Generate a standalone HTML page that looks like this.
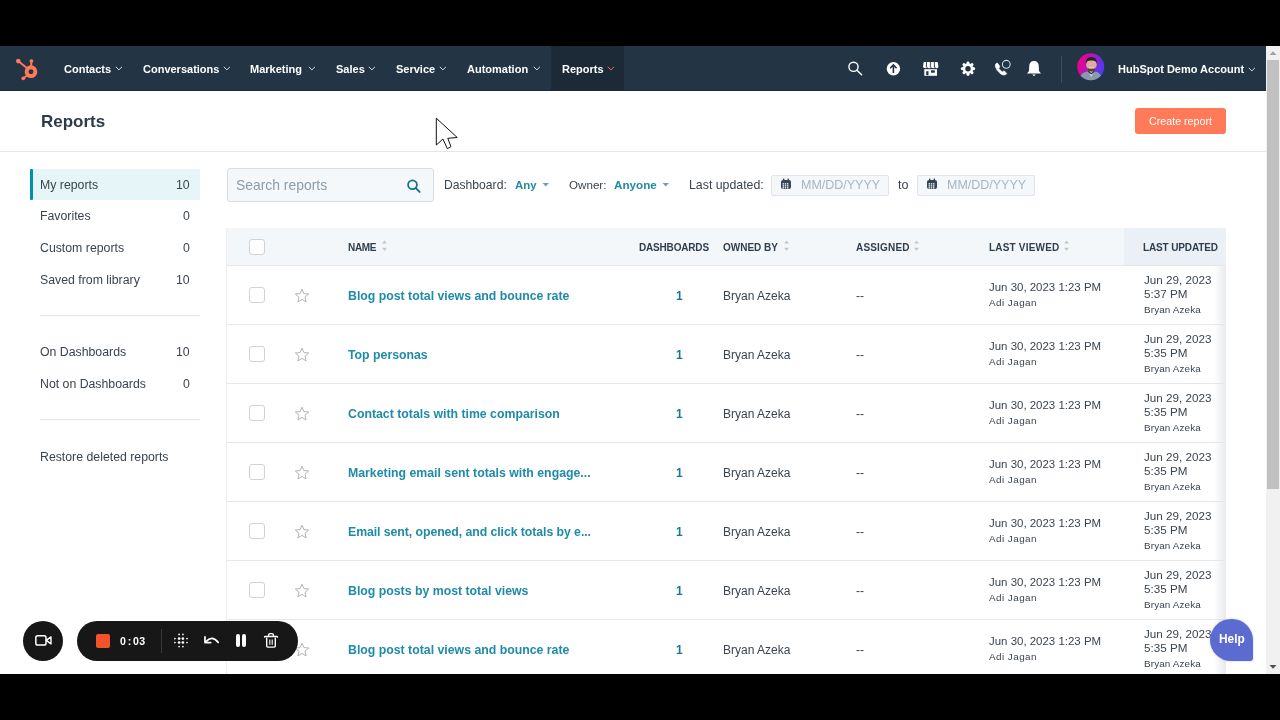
<!DOCTYPE html>
<html><head><meta charset="utf-8"><style>
html,body{margin:0;padding:0;}
body{width:1280px;height:720px;background:#000;position:relative;overflow:hidden;font-family:"Liberation Sans", sans-serif;}
.t{position:absolute;white-space:nowrap;will-change:transform;}
</style></head><body>
<div style="position:absolute;left:0px;top:46px;width:1266px;height:628px;background:#fff"></div>
<div style="position:absolute;left:0px;top:46px;width:1266px;height:45px;background:#233444"></div>
<div style="position:absolute;left:551px;top:46px;width:73px;height:45px;background:#1c2a38"></div>
<div style="position:absolute;left:0px;top:90px;width:1266px;height:1px;background:#1e2a37"></div>
<svg style="position:absolute;left:14px;top:56px;" width="26" height="26" viewBox="0 0 26 26">
<g fill="#ff7a59" stroke="#ff7a59">
<circle cx="17" cy="15.7" r="4.4" fill="none" stroke-width="3.9"/>
<line x1="17.2" y1="10" x2="17.4" y2="5.5" stroke-width="1.9"/>
<circle cx="17.4" cy="5.1" r="1.9" stroke="none"/>
<line x1="13.5" y1="12.5" x2="4.8" y2="5.6" stroke-width="1.9"/>
<circle cx="4.3" cy="5.1" r="2.3" stroke="none"/>
<line x1="13.8" y1="19" x2="9.5" y2="22" stroke-width="1.9"/>
<circle cx="9.3" cy="22.3" r="1.9" stroke="none"/>
</g></svg>
<div class="t" style="left:63.6px;top:63.87px;font-size:11px;line-height:11px;font-weight:700;color:#fff;">Contacts</div>
<svg style="position:absolute;left:114.5px;top:66.3px;" width="8" height="5" viewBox="0 0 8 5"><path d="M0.8 0.8 L3.9 3.9 L7 0.8" fill="none" stroke="#d3dae2" stroke-width="1.0"/></svg>
<div class="t" style="left:142.5px;top:63.87px;font-size:11px;line-height:11px;font-weight:700;color:#fff;">Conversations</div>
<svg style="position:absolute;left:222.5px;top:66.3px;" width="8" height="5" viewBox="0 0 8 5"><path d="M0.8 0.8 L3.9 3.9 L7 0.8" fill="none" stroke="#d3dae2" stroke-width="1.0"/></svg>
<div class="t" style="left:250.2px;top:63.87px;font-size:11px;line-height:11px;font-weight:700;color:#fff;">Marketing</div>
<svg style="position:absolute;left:308.25px;top:66.3px;" width="8" height="5" viewBox="0 0 8 5"><path d="M0.8 0.8 L3.9 3.9 L7 0.8" fill="none" stroke="#d3dae2" stroke-width="1.0"/></svg>
<div class="t" style="left:336px;top:63.87px;font-size:11px;line-height:11px;font-weight:700;color:#fff;">Sales</div>
<svg style="position:absolute;left:367.5px;top:66.3px;" width="8" height="5" viewBox="0 0 8 5"><path d="M0.8 0.8 L3.9 3.9 L7 0.8" fill="none" stroke="#d3dae2" stroke-width="1.0"/></svg>
<div class="t" style="left:395.6px;top:63.87px;font-size:11px;line-height:11px;font-weight:700;color:#fff;">Service</div>
<svg style="position:absolute;left:439.3px;top:66.3px;" width="8" height="5" viewBox="0 0 8 5"><path d="M0.8 0.8 L3.9 3.9 L7 0.8" fill="none" stroke="#d3dae2" stroke-width="1.0"/></svg>
<div class="t" style="left:467.3px;top:63.87px;font-size:11px;line-height:11px;font-weight:700;color:#fff;">Automation</div>
<svg style="position:absolute;left:533.25px;top:66.3px;" width="8" height="5" viewBox="0 0 8 5"><path d="M0.8 0.8 L3.9 3.9 L7 0.8" fill="none" stroke="#d3dae2" stroke-width="1.0"/></svg>
<div class="t" style="left:561.9px;top:63.87px;font-size:11px;line-height:11px;font-weight:700;color:#fff;">Reports</div>
<svg style="position:absolute;left:606.5px;top:66.3px;" width="8" height="5" viewBox="0 0 8 5"><path d="M0.8 0.8 L3.9 3.9 L7 0.8" fill="none" stroke="#e8735c" stroke-width="1.0"/></svg>
<svg style="position:absolute;left:846px;top:59px;" width="20" height="20" viewBox="0 0 20 20"><circle cx="7.5" cy="7.8" r="4.6" fill="none" stroke="#fff" stroke-width="1.4"/><line x1="10.9" y1="11.2" x2="15.6" y2="15.8" stroke="#fff" stroke-width="1.5" stroke-linecap="round"/></svg>
<svg style="position:absolute;left:885px;top:60px;" width="18" height="18" viewBox="0 0 18 18"><circle cx="8.4" cy="8.8" r="6.7" fill="#fff"/><path d="M8.4 13 V5.2 M5.2 8.2 L8.4 5 L11.6 8.2" fill="none" stroke="#233444" stroke-width="1.6"/></svg>
<svg style="position:absolute;left:915px;top:56px;" width="30" height="24" viewBox="0 0 30 24"><path d="M9.3 6 H22.1 Q22.6 6 22.8 6.6 L23.4 10.8 Q23.4 12.2 22 12.2 Q20.6 12.2 20.2 11.2 Q19.6 12.2 18.3 12.2 Q16.8 12.2 16.3 11.2 Q15.7 12.2 14.4 12.2 Q12.9 12.2 12.4 11.2 Q11.8 12.2 10.4 12.2 Q8 12.2 8 10.8 L8.6 6.6 Q8.8 6 9.3 6 Z" fill="#fff"/><path d="M11.6 5.8 L11.3 11.6 M15.4 5.8 L15.3 11.6 M19.3 5.8 L19.5 11.6" stroke="#233444" stroke-width="0.9"/><rect x="9.3" y="13.2" width="12.7" height="6.6" fill="#fff"/><rect x="11.2" y="15.2" width="2.3" height="4" fill="#233444"/><rect x="16" y="14.3" width="3.8" height="2.4" fill="#233444"/></svg>
<svg style="position:absolute;left:959px;top:60px;" width="18" height="18" viewBox="0 0 18 18"><g transform="translate(9,8.7)"><circle r="5.1" fill="#fff"/><circle cx="0" cy="-5.75" r="1.45" fill="#fff" transform="rotate(0)"/><rect x="-1.45" y="-5.75" width="2.9" height="2" fill="#fff" transform="rotate(0)"/><circle cx="0" cy="-5.75" r="1.45" fill="#fff" transform="rotate(45)"/><rect x="-1.45" y="-5.75" width="2.9" height="2" fill="#fff" transform="rotate(45)"/><circle cx="0" cy="-5.75" r="1.45" fill="#fff" transform="rotate(90)"/><rect x="-1.45" y="-5.75" width="2.9" height="2" fill="#fff" transform="rotate(90)"/><circle cx="0" cy="-5.75" r="1.45" fill="#fff" transform="rotate(135)"/><rect x="-1.45" y="-5.75" width="2.9" height="2" fill="#fff" transform="rotate(135)"/><circle cx="0" cy="-5.75" r="1.45" fill="#fff" transform="rotate(180)"/><rect x="-1.45" y="-5.75" width="2.9" height="2" fill="#fff" transform="rotate(180)"/><circle cx="0" cy="-5.75" r="1.45" fill="#fff" transform="rotate(225)"/><rect x="-1.45" y="-5.75" width="2.9" height="2" fill="#fff" transform="rotate(225)"/><circle cx="0" cy="-5.75" r="1.45" fill="#fff" transform="rotate(270)"/><rect x="-1.45" y="-5.75" width="2.9" height="2" fill="#fff" transform="rotate(270)"/><circle cx="0" cy="-5.75" r="1.45" fill="#fff" transform="rotate(315)"/><rect x="-1.45" y="-5.75" width="2.9" height="2" fill="#fff" transform="rotate(315)"/><circle r="2.75" fill="#233444"/></g></svg>
<svg style="position:absolute;left:993px;top:58px;" width="20" height="20" viewBox="0 0 20 20"><path d="M3.2 5.5 Q2 6.4 2.4 8.6 Q3.5 12.6 7.5 15.8 Q10 17.5 12.2 16.8 Q13.5 16.3 13.6 15.4 L11.6 13.2 Q10.8 12.7 10 13.4 L9.4 14 Q7.4 12.8 5.7 10.3 L6.3 9.6 Q7 8.8 6.5 8 L4.7 5.3 Q4 4.8 3.2 5.5 Z" fill="#fff" stroke="#fff" stroke-width="0.7" stroke-linejoin="round"/><circle cx="13.3" cy="6.3" r="3.9" fill="none" stroke="#d0d8e2" stroke-width="1.1"/></svg>
<svg style="position:absolute;left:1025px;top:59.4px;" width="18" height="19" viewBox="0 0 18 19"><path d="M9 2 Q13.7 2 13.8 7.5 L14 12 L16 14.5 H2 L4 12 L4.2 7.5 Q4.3 2 9 2 Z" fill="#fff"/><path d="M7.3 15.5 H10.7 L9 17.2 Z" fill="#fff"/></svg>
<div style="position:absolute;left:1061px;top:56px;width:1px;height:27px;background:#3b4e62"></div>
<svg style="position:absolute;left:1076px;top:52px;" width="30" height="30" viewBox="0 0 30 30"><defs><linearGradient id="ag" x1="0" y1="0.3" x2="1" y2="0.7"><stop offset="0.12" stop-color="#e4068c"/><stop offset="0.5" stop-color="#a21ad2"/><stop offset="0.92" stop-color="#4a3cf0"/></linearGradient>
<clipPath id="ac"><circle cx="14.75" cy="14.75" r="13.5"/></clipPath></defs>
<circle cx="14.75" cy="14.75" r="13.5" fill="url(#ag)"/>
<g clip-path="url(#ac)">
<path d="M2.5 30 Q3 22.5 9 20 L15 19 L21 20 Q26.5 22.5 27 30 Z" fill="#8a9aae"/>
<path d="M12.4 19.6 L15.2 25 L18 19.6 Z" fill="#d8dce4"/>
<path d="M12 18 L15.2 21 L18.4 18 V20 L15.2 22.5 L12 20 Z" fill="#3a3036"/>
<ellipse cx="15.4" cy="12.6" rx="5.3" ry="6.7" fill="#dcaca2"/>
<path d="M10 12 Q9.4 5 15.4 5.1 Q21.4 5 20.8 12 Q20 8.2 15.4 8.6 Q10.8 8.2 10 12 Z" fill="#2e1f22"/>
<path d="M10.4 13.5 Q10.8 19 15.4 19.4 Q20 19 20.4 13.5 Q19.8 17 17.6 16.4 Q15.4 15.4 13.2 16.4 Q11 17 10.4 13.5 Z" fill="#5a3c3c"/>
<path d="M13 15.6 Q15.4 17 17.8 15.6" fill="none" stroke="#f4eeee" stroke-width="0.9"/>
</g></svg>
<div class="t" style="left:1117.5px;top:63.67px;font-size:11px;line-height:11px;font-weight:700;color:#fff;">HubSpot Demo Account</div>
<svg style="position:absolute;left:1248px;top:66.8px;" width="8" height="5" viewBox="0 0 8 5"><path d="M0.8 0.8 L3.9 3.9 L7 0.8" fill="none" stroke="#d3dae2" stroke-width="1.0"/></svg>
<div class="t" style="left:40.8px;top:112.59px;font-size:17px;line-height:17px;font-weight:700;color:#2c3a4a;">Reports</div>
<div style="position:absolute;left:1135px;top:108px;width:91px;height:26px;background:#ff7a59;border-radius:3px"></div>
<div class="t" style="left:1148.5px;top:116.12px;font-size:10.7px;line-height:10.7px;font-weight:400;color:#fff;">Create report</div>
<div style="position:absolute;left:0px;top:151px;width:1266px;height:1px;background:#e4e7eb"></div>
<div style="position:absolute;left:30px;top:169px;width:170px;height:31px;background:#e5f5f8"></div>
<div style="position:absolute;left:30px;top:169px;width:3px;height:31px;background:#0091ae;border-radius:1px"></div>
<div class="t" style="left:40.4px;top:178.99px;font-size:12.3px;line-height:12.3px;font-weight:400;color:#3a444f;">My reports</div>
<div class="t" style="right:1090.2px;top:178.99px;font-size:12.3px;line-height:12.3px;font-weight:400;color:#3a444f;">10</div>
<div class="t" style="left:40.4px;top:210.49px;font-size:12.3px;line-height:12.3px;font-weight:400;color:#3a444f;">Favorites</div>
<div class="t" style="right:1090.2px;top:210.49px;font-size:12.3px;line-height:12.3px;font-weight:400;color:#3a444f;">0</div>
<div class="t" style="left:40.4px;top:242.19px;font-size:12.3px;line-height:12.3px;font-weight:400;color:#3a444f;">Custom reports</div>
<div class="t" style="right:1090.2px;top:242.19px;font-size:12.3px;line-height:12.3px;font-weight:400;color:#3a444f;">0</div>
<div class="t" style="left:40.4px;top:273.69px;font-size:12.3px;line-height:12.3px;font-weight:400;color:#3a444f;">Saved from library</div>
<div class="t" style="right:1090.2px;top:273.69px;font-size:12.3px;line-height:12.3px;font-weight:400;color:#3a444f;">10</div>
<div class="t" style="left:40.4px;top:346.04px;font-size:12.3px;line-height:12.3px;font-weight:400;color:#3a444f;">On Dashboards</div>
<div class="t" style="right:1090.2px;top:346.04px;font-size:12.3px;line-height:12.3px;font-weight:400;color:#3a444f;">10</div>
<div class="t" style="left:40.4px;top:378.04px;font-size:12.3px;line-height:12.3px;font-weight:400;color:#3a444f;">Not on Dashboards</div>
<div class="t" style="right:1090.2px;top:378.04px;font-size:12.3px;line-height:12.3px;font-weight:400;color:#3a444f;">0</div>
<div style="position:absolute;left:40px;top:315px;width:160px;height:1px;background:#e3e6e9"></div>
<div style="position:absolute;left:40px;top:419px;width:160px;height:1px;background:#e3e6e9"></div>
<div class="t" style="left:40.4px;top:450.54px;font-size:12.3px;line-height:12.3px;font-weight:400;color:#3a444f;">Restore deleted reports</div>
<div style="position:absolute;left:227px;top:168px;width:207px;height:34px;background:#f5f8fa;border:1px solid #d9dee4;border-radius:3px;box-sizing:border-box"></div>
<div class="t" style="left:236.3px;top:178.86px;font-size:13.9px;line-height:13.9px;font-weight:400;color:#8c9cad;">Search reports</div>
<svg style="position:absolute;left:405px;top:178px;" width="18" height="18" viewBox="0 0 18 18"><circle cx="7.5" cy="6.7" r="4.4" fill="none" stroke="#17728a" stroke-width="1.8"/><line x1="10.6" y1="9.9" x2="14.6" y2="13.9" stroke="#17728a" stroke-width="2" stroke-linecap="round"/></svg>
<div class="t" style="left:444.4px;top:179.22px;font-size:12.15px;line-height:12.15px;font-weight:400;color:#3a444f;">Dashboard:</div>
<div class="t" style="left:514.7px;top:179.84px;font-size:11.4px;line-height:11.4px;font-weight:700;color:#1f8ba8;">Any</div>
<svg style="position:absolute;left:541.5px;top:182px;" width="8" height="6" viewBox="0 0 8 6"><path d="M0.5 1 H7 L3.75 4.6 Z" fill="#7c98b6"/></svg>
<div class="t" style="left:568.5px;top:178.95px;font-size:11.63px;line-height:11.63px;font-weight:400;color:#3a444f;">Owner:</div>
<div class="t" style="left:613.5px;top:178.92px;font-size:11.66px;line-height:11.66px;font-weight:700;color:#1f8ba8;">Anyone</div>
<svg style="position:absolute;left:661.5px;top:182px;" width="8" height="6" viewBox="0 0 8 6"><path d="M0.5 1 H7 L3.75 4.6 Z" fill="#7c98b6"/></svg>
<div class="t" style="left:688.6px;top:179.16px;font-size:12.34px;line-height:12.34px;font-weight:400;color:#3a444f;">Last updated:</div>
<div style="position:absolute;left:771px;top:175px;width:118px;height:21px;background:#f5f8fa;border:1px solid #dfe3eb;border-radius:2px;box-sizing:border-box"></div>
<svg style="position:absolute;left:779.5px;top:178px;" width="12" height="12" viewBox="0 0 12 12"><rect x="1" y="2" width="10" height="9" rx="2" fill="#33475b"/><rect x="3" y="0.6" width="1.4" height="2.6" fill="#33475b"/><rect x="7.6" y="0.6" width="1.4" height="2.6" fill="#33475b"/><rect x="2.6" y="5.2" width="1.4" height="1.3" fill="#fff"/><rect x="2.6" y="7.2" width="1.4" height="1.3" fill="#fff"/><rect x="2.6" y="9.2" width="1.4" height="1.3" fill="#fff"/><rect x="4.800000000000001" y="5.2" width="1.4" height="1.3" fill="#fff"/><rect x="4.800000000000001" y="7.2" width="1.4" height="1.3" fill="#fff"/><rect x="4.800000000000001" y="9.2" width="1.4" height="1.3" fill="#fff"/><rect x="7.0" y="5.2" width="1.4" height="1.3" fill="#fff"/><rect x="7.0" y="7.2" width="1.4" height="1.3" fill="#fff"/><rect x="7.0" y="9.2" width="1.4" height="1.3" fill="#fff"/></svg>
<div class="t" style="left:800.5px;top:179.03px;font-size:12.49px;line-height:12.49px;font-weight:400;color:#a6b6c6;">MM/DD/YYYY</div>
<div class="t" style="left:898.3px;top:178.95px;font-size:12.59px;line-height:12.59px;font-weight:400;color:#3a444f;">to</div>
<div style="position:absolute;left:917px;top:175px;width:118px;height:21px;background:#f5f8fa;border:1px solid #dfe3eb;border-radius:2px;box-sizing:border-box"></div>
<svg style="position:absolute;left:925.5px;top:178px;" width="12" height="12" viewBox="0 0 12 12"><rect x="1" y="2" width="10" height="9" rx="2" fill="#33475b"/><rect x="3" y="0.6" width="1.4" height="2.6" fill="#33475b"/><rect x="7.6" y="0.6" width="1.4" height="2.6" fill="#33475b"/><rect x="2.6" y="5.2" width="1.4" height="1.3" fill="#fff"/><rect x="2.6" y="7.2" width="1.4" height="1.3" fill="#fff"/><rect x="2.6" y="9.2" width="1.4" height="1.3" fill="#fff"/><rect x="4.800000000000001" y="5.2" width="1.4" height="1.3" fill="#fff"/><rect x="4.800000000000001" y="7.2" width="1.4" height="1.3" fill="#fff"/><rect x="4.800000000000001" y="9.2" width="1.4" height="1.3" fill="#fff"/><rect x="7.0" y="5.2" width="1.4" height="1.3" fill="#fff"/><rect x="7.0" y="7.2" width="1.4" height="1.3" fill="#fff"/><rect x="7.0" y="9.2" width="1.4" height="1.3" fill="#fff"/></svg>
<div class="t" style="left:946.5px;top:179.03px;font-size:12.49px;line-height:12.49px;font-weight:400;color:#a6b6c6;">MM/DD/YYYY</div>
<div style="position:absolute;left:227px;top:228px;width:999px;height:37px;background:#f4f7f9"></div>
<div style="position:absolute;left:1123.5px;top:228px;width:102px;height:37px;background:#eaf0f6"></div>
<div style="position:absolute;left:226px;top:228px;width:1px;height:446px;background:#eceef0"></div>
<div style="position:absolute;left:227px;top:265px;width:999px;height:1px;background:#e3e7eb"></div>
<div style="position:absolute;left:249px;top:239px;width:16px;height:16px;background:#fff;border:1.6px solid #cfd3d8;border-radius:3px;box-sizing:border-box"></div>
<div class="t" style="left:347.8px;top:242.70px;font-size:10px;line-height:10px;font-weight:700;color:#2f3e4e;letter-spacing:-0.3px">NAME</div>
<svg style="position:absolute;left:380.5px;top:240px;" width="7" height="12" viewBox="0 0 7 12"><path d="M3.5 0.6 L5.9 3.6 H1.1 Z M3.5 11 L5.9 7.8 H1.1 Z" fill="#c3c7cc"/></svg>
<div class="t" style="left:639.25px;top:242.70px;font-size:10px;line-height:10px;font-weight:700;color:#2f3e4e;letter-spacing:-0.18px">DASHBOARDS</div>
<div class="t" style="left:722.5px;top:242.70px;font-size:10px;line-height:10px;font-weight:700;color:#2f3e4e;letter-spacing:0px">OWNED BY</div>
<svg style="position:absolute;left:782.55px;top:240px;" width="7" height="12" viewBox="0 0 7 12"><path d="M3.5 0.6 L5.9 3.6 H1.1 Z M3.5 11 L5.9 7.8 H1.1 Z" fill="#c3c7cc"/></svg>
<div class="t" style="left:855.75px;top:242.70px;font-size:10px;line-height:10px;font-weight:700;color:#2f3e4e;letter-spacing:0.18px">ASSIGNED</div>
<svg style="position:absolute;left:913.3px;top:240px;" width="7" height="12" viewBox="0 0 7 12"><path d="M3.5 0.6 L5.9 3.6 H1.1 Z M3.5 11 L5.9 7.8 H1.1 Z" fill="#c3c7cc"/></svg>
<div class="t" style="left:988.75px;top:242.70px;font-size:10px;line-height:10px;font-weight:700;color:#2f3e4e;letter-spacing:0.19px">LAST VIEWED</div>
<svg style="position:absolute;left:1063.2px;top:240px;" width="7" height="12" viewBox="0 0 7 12"><path d="M3.5 0.6 L5.9 3.6 H1.1 Z M3.5 11 L5.9 7.8 H1.1 Z" fill="#c3c7cc"/></svg>
<div class="t" style="left:1143.4px;top:242.70px;font-size:10px;line-height:10px;font-weight:700;color:#2f3e4e;letter-spacing:-0.13px">LAST UPDATED</div>
<div style="position:absolute;left:227px;top:324px;width:999px;height:1px;background:#e5e7ea"></div>
<div style="position:absolute;left:249px;top:287px;width:16px;height:16px;background:#fff;border:1.6px solid #cfd3d8;border-radius:3px;box-sizing:border-box"></div>
<svg style="position:absolute;left:294px;top:288px;" width="16" height="15" viewBox="0 0 16 15"><path d="M8 1.2 L9.9 5.6 L14.7 6 L11 9.2 L12.1 13.9 L8 11.4 L3.9 13.9 L5 9.2 L1.3 6 L6.1 5.6 Z" fill="none" stroke="#aeb4ba" stroke-width="1" stroke-linejoin="round"/></svg>
<div class="t" style="left:347.6px;top:289.58px;font-size:12.31px;line-height:12.31px;font-weight:700;color:#1f8ba8;">Blog post total views and bounce rate</div>
<div class="t" style="left:676.3px;top:289.84px;font-size:12px;line-height:12px;font-weight:700;color:#157a94;">1</div>
<div class="t" style="left:722.7px;top:289.84px;font-size:12px;line-height:12px;font-weight:400;color:#3a444f;">Bryan Azeka</div>
<div class="t" style="left:855.9px;top:289.84px;font-size:12px;line-height:12px;font-weight:400;color:#3a444f;">--</div>
<div class="t" style="left:989.3px;top:281.79px;font-size:11.46px;line-height:11.46px;font-weight:400;color:#3a444f;">Jun 30, 2023 1:23 PM</div>
<div class="t" style="left:989.3px;top:297.58px;font-size:9.9px;line-height:9.9px;font-weight:400;color:#3a444f;letter-spacing:0.45px">Adi Jagan</div>
<div class="t" style="left:1144px;top:274.12px;font-size:11.66px;line-height:11.66px;font-weight:400;color:#3a444f;">Jun 29, 2023</div>
<div class="t" style="left:1144px;top:288.32px;font-size:11.66px;line-height:11.66px;font-weight:400;color:#3a444f;">5:37 PM</div>
<div class="t" style="left:1144px;top:305.18px;font-size:9.9px;line-height:9.9px;font-weight:400;color:#3a444f;letter-spacing:0.13px">Bryan Azeka</div>
<div style="position:absolute;left:227px;top:383px;width:999px;height:1px;background:#e5e7ea"></div>
<div style="position:absolute;left:249px;top:346px;width:16px;height:16px;background:#fff;border:1.6px solid #cfd3d8;border-radius:3px;box-sizing:border-box"></div>
<svg style="position:absolute;left:294px;top:347px;" width="16" height="15" viewBox="0 0 16 15"><path d="M8 1.2 L9.9 5.6 L14.7 6 L11 9.2 L12.1 13.9 L8 11.4 L3.9 13.9 L5 9.2 L1.3 6 L6.1 5.6 Z" fill="none" stroke="#aeb4ba" stroke-width="1" stroke-linejoin="round"/></svg>
<div class="t" style="left:347.6px;top:348.58px;font-size:12.31px;line-height:12.31px;font-weight:700;color:#1f8ba8;">Top personas</div>
<div class="t" style="left:676.3px;top:348.84px;font-size:12px;line-height:12px;font-weight:700;color:#157a94;">1</div>
<div class="t" style="left:722.7px;top:348.84px;font-size:12px;line-height:12px;font-weight:400;color:#3a444f;">Bryan Azeka</div>
<div class="t" style="left:855.9px;top:348.84px;font-size:12px;line-height:12px;font-weight:400;color:#3a444f;">--</div>
<div class="t" style="left:989.3px;top:340.79px;font-size:11.46px;line-height:11.46px;font-weight:400;color:#3a444f;">Jun 30, 2023 1:23 PM</div>
<div class="t" style="left:989.3px;top:356.58px;font-size:9.9px;line-height:9.9px;font-weight:400;color:#3a444f;letter-spacing:0.45px">Adi Jagan</div>
<div class="t" style="left:1144px;top:333.12px;font-size:11.66px;line-height:11.66px;font-weight:400;color:#3a444f;">Jun 29, 2023</div>
<div class="t" style="left:1144px;top:347.32px;font-size:11.66px;line-height:11.66px;font-weight:400;color:#3a444f;">5:35 PM</div>
<div class="t" style="left:1144px;top:364.18px;font-size:9.9px;line-height:9.9px;font-weight:400;color:#3a444f;letter-spacing:0.13px">Bryan Azeka</div>
<div style="position:absolute;left:227px;top:442px;width:999px;height:1px;background:#e5e7ea"></div>
<div style="position:absolute;left:249px;top:405px;width:16px;height:16px;background:#fff;border:1.6px solid #cfd3d8;border-radius:3px;box-sizing:border-box"></div>
<svg style="position:absolute;left:294px;top:406px;" width="16" height="15" viewBox="0 0 16 15"><path d="M8 1.2 L9.9 5.6 L14.7 6 L11 9.2 L12.1 13.9 L8 11.4 L3.9 13.9 L5 9.2 L1.3 6 L6.1 5.6 Z" fill="none" stroke="#aeb4ba" stroke-width="1" stroke-linejoin="round"/></svg>
<div class="t" style="left:347.6px;top:407.58px;font-size:12.31px;line-height:12.31px;font-weight:700;color:#1f8ba8;">Contact totals with time comparison</div>
<div class="t" style="left:676.3px;top:407.84px;font-size:12px;line-height:12px;font-weight:700;color:#157a94;">1</div>
<div class="t" style="left:722.7px;top:407.84px;font-size:12px;line-height:12px;font-weight:400;color:#3a444f;">Bryan Azeka</div>
<div class="t" style="left:855.9px;top:407.84px;font-size:12px;line-height:12px;font-weight:400;color:#3a444f;">--</div>
<div class="t" style="left:989.3px;top:399.79px;font-size:11.46px;line-height:11.46px;font-weight:400;color:#3a444f;">Jun 30, 2023 1:23 PM</div>
<div class="t" style="left:989.3px;top:415.58px;font-size:9.9px;line-height:9.9px;font-weight:400;color:#3a444f;letter-spacing:0.45px">Adi Jagan</div>
<div class="t" style="left:1144px;top:392.12px;font-size:11.66px;line-height:11.66px;font-weight:400;color:#3a444f;">Jun 29, 2023</div>
<div class="t" style="left:1144px;top:406.32px;font-size:11.66px;line-height:11.66px;font-weight:400;color:#3a444f;">5:35 PM</div>
<div class="t" style="left:1144px;top:423.18px;font-size:9.9px;line-height:9.9px;font-weight:400;color:#3a444f;letter-spacing:0.13px">Bryan Azeka</div>
<div style="position:absolute;left:227px;top:501px;width:999px;height:1px;background:#e5e7ea"></div>
<div style="position:absolute;left:249px;top:464px;width:16px;height:16px;background:#fff;border:1.6px solid #cfd3d8;border-radius:3px;box-sizing:border-box"></div>
<svg style="position:absolute;left:294px;top:465px;" width="16" height="15" viewBox="0 0 16 15"><path d="M8 1.2 L9.9 5.6 L14.7 6 L11 9.2 L12.1 13.9 L8 11.4 L3.9 13.9 L5 9.2 L1.3 6 L6.1 5.6 Z" fill="none" stroke="#aeb4ba" stroke-width="1" stroke-linejoin="round"/></svg>
<div class="t" style="left:347.6px;top:466.58px;font-size:12.31px;line-height:12.31px;font-weight:700;color:#1f8ba8;">Marketing email sent totals with engage...</div>
<div class="t" style="left:676.3px;top:466.84px;font-size:12px;line-height:12px;font-weight:700;color:#157a94;">1</div>
<div class="t" style="left:722.7px;top:466.84px;font-size:12px;line-height:12px;font-weight:400;color:#3a444f;">Bryan Azeka</div>
<div class="t" style="left:855.9px;top:466.84px;font-size:12px;line-height:12px;font-weight:400;color:#3a444f;">--</div>
<div class="t" style="left:989.3px;top:458.79px;font-size:11.46px;line-height:11.46px;font-weight:400;color:#3a444f;">Jun 30, 2023 1:23 PM</div>
<div class="t" style="left:989.3px;top:474.58px;font-size:9.9px;line-height:9.9px;font-weight:400;color:#3a444f;letter-spacing:0.45px">Adi Jagan</div>
<div class="t" style="left:1144px;top:451.12px;font-size:11.66px;line-height:11.66px;font-weight:400;color:#3a444f;">Jun 29, 2023</div>
<div class="t" style="left:1144px;top:465.32px;font-size:11.66px;line-height:11.66px;font-weight:400;color:#3a444f;">5:35 PM</div>
<div class="t" style="left:1144px;top:482.18px;font-size:9.9px;line-height:9.9px;font-weight:400;color:#3a444f;letter-spacing:0.13px">Bryan Azeka</div>
<div style="position:absolute;left:227px;top:560px;width:999px;height:1px;background:#e5e7ea"></div>
<div style="position:absolute;left:249px;top:523px;width:16px;height:16px;background:#fff;border:1.6px solid #cfd3d8;border-radius:3px;box-sizing:border-box"></div>
<svg style="position:absolute;left:294px;top:524px;" width="16" height="15" viewBox="0 0 16 15"><path d="M8 1.2 L9.9 5.6 L14.7 6 L11 9.2 L12.1 13.9 L8 11.4 L3.9 13.9 L5 9.2 L1.3 6 L6.1 5.6 Z" fill="none" stroke="#aeb4ba" stroke-width="1" stroke-linejoin="round"/></svg>
<div class="t" style="left:347.6px;top:525.58px;font-size:12.31px;line-height:12.31px;font-weight:700;color:#1f8ba8;letter-spacing:-0.07px">Email sent, opened, and click totals by e...</div>
<div class="t" style="left:676.3px;top:525.84px;font-size:12px;line-height:12px;font-weight:700;color:#157a94;">1</div>
<div class="t" style="left:722.7px;top:525.84px;font-size:12px;line-height:12px;font-weight:400;color:#3a444f;">Bryan Azeka</div>
<div class="t" style="left:855.9px;top:525.84px;font-size:12px;line-height:12px;font-weight:400;color:#3a444f;">--</div>
<div class="t" style="left:989.3px;top:517.79px;font-size:11.46px;line-height:11.46px;font-weight:400;color:#3a444f;">Jun 30, 2023 1:23 PM</div>
<div class="t" style="left:989.3px;top:533.58px;font-size:9.9px;line-height:9.9px;font-weight:400;color:#3a444f;letter-spacing:0.45px">Adi Jagan</div>
<div class="t" style="left:1144px;top:510.12px;font-size:11.66px;line-height:11.66px;font-weight:400;color:#3a444f;">Jun 29, 2023</div>
<div class="t" style="left:1144px;top:524.32px;font-size:11.66px;line-height:11.66px;font-weight:400;color:#3a444f;">5:35 PM</div>
<div class="t" style="left:1144px;top:541.18px;font-size:9.9px;line-height:9.9px;font-weight:400;color:#3a444f;letter-spacing:0.13px">Bryan Azeka</div>
<div style="position:absolute;left:227px;top:619px;width:999px;height:1px;background:#e5e7ea"></div>
<div style="position:absolute;left:249px;top:582px;width:16px;height:16px;background:#fff;border:1.6px solid #cfd3d8;border-radius:3px;box-sizing:border-box"></div>
<svg style="position:absolute;left:294px;top:583px;" width="16" height="15" viewBox="0 0 16 15"><path d="M8 1.2 L9.9 5.6 L14.7 6 L11 9.2 L12.1 13.9 L8 11.4 L3.9 13.9 L5 9.2 L1.3 6 L6.1 5.6 Z" fill="none" stroke="#aeb4ba" stroke-width="1" stroke-linejoin="round"/></svg>
<div class="t" style="left:347.6px;top:584.58px;font-size:12.31px;line-height:12.31px;font-weight:700;color:#1f8ba8;">Blog posts by most total views</div>
<div class="t" style="left:676.3px;top:584.84px;font-size:12px;line-height:12px;font-weight:700;color:#157a94;">1</div>
<div class="t" style="left:722.7px;top:584.84px;font-size:12px;line-height:12px;font-weight:400;color:#3a444f;">Bryan Azeka</div>
<div class="t" style="left:855.9px;top:584.84px;font-size:12px;line-height:12px;font-weight:400;color:#3a444f;">--</div>
<div class="t" style="left:989.3px;top:576.79px;font-size:11.46px;line-height:11.46px;font-weight:400;color:#3a444f;">Jun 30, 2023 1:23 PM</div>
<div class="t" style="left:989.3px;top:592.58px;font-size:9.9px;line-height:9.9px;font-weight:400;color:#3a444f;letter-spacing:0.45px">Adi Jagan</div>
<div class="t" style="left:1144px;top:569.12px;font-size:11.66px;line-height:11.66px;font-weight:400;color:#3a444f;">Jun 29, 2023</div>
<div class="t" style="left:1144px;top:583.32px;font-size:11.66px;line-height:11.66px;font-weight:400;color:#3a444f;">5:35 PM</div>
<div class="t" style="left:1144px;top:600.18px;font-size:9.9px;line-height:9.9px;font-weight:400;color:#3a444f;letter-spacing:0.13px">Bryan Azeka</div>
<div style="position:absolute;left:249px;top:641px;width:16px;height:16px;background:#fff;border:1.6px solid #cfd3d8;border-radius:3px;box-sizing:border-box"></div>
<svg style="position:absolute;left:294px;top:642px;" width="16" height="15" viewBox="0 0 16 15"><path d="M8 1.2 L9.9 5.6 L14.7 6 L11 9.2 L12.1 13.9 L8 11.4 L3.9 13.9 L5 9.2 L1.3 6 L6.1 5.6 Z" fill="none" stroke="#aeb4ba" stroke-width="1" stroke-linejoin="round"/></svg>
<div class="t" style="left:347.6px;top:643.58px;font-size:12.31px;line-height:12.31px;font-weight:700;color:#1f8ba8;">Blog post total views and bounce rate</div>
<div class="t" style="left:676.3px;top:643.84px;font-size:12px;line-height:12px;font-weight:700;color:#157a94;">1</div>
<div class="t" style="left:722.7px;top:643.84px;font-size:12px;line-height:12px;font-weight:400;color:#3a444f;">Bryan Azeka</div>
<div class="t" style="left:855.9px;top:643.84px;font-size:12px;line-height:12px;font-weight:400;color:#3a444f;">--</div>
<div class="t" style="left:989.3px;top:635.79px;font-size:11.46px;line-height:11.46px;font-weight:400;color:#3a444f;">Jun 30, 2023 1:23 PM</div>
<div class="t" style="left:989.3px;top:651.58px;font-size:9.9px;line-height:9.9px;font-weight:400;color:#3a444f;letter-spacing:0.45px">Adi Jagan</div>
<div class="t" style="left:1144px;top:628.12px;font-size:11.66px;line-height:11.66px;font-weight:400;color:#3a444f;">Jun 29, 2023</div>
<div class="t" style="left:1144px;top:642.32px;font-size:11.66px;line-height:11.66px;font-weight:400;color:#3a444f;">5:35 PM</div>
<div class="t" style="left:1144px;top:659.18px;font-size:9.9px;line-height:9.9px;font-weight:400;color:#3a444f;letter-spacing:0.13px">Bryan Azeka</div>
<div style="position:absolute;left:1214px;top:265px;width:12px;height:409px;background:linear-gradient(to right, rgba(240,242,244,0), rgba(230,232,235,0.9))"></div>
<div style="position:absolute;left:1266px;top:46px;width:14px;height:628px;background:#f1f1f1"></div>
<div style="position:absolute;left:1267px;top:60px;width:12px;height:429px;background:#c1c1c1"></div>
<svg style="position:absolute;left:1266px;top:46px;" width="14" height="14" viewBox="0 0 14 14"><path d="M3.5 9 L7 5.2 L10.5 9 Z" fill="#a3a3a3"/></svg>
<svg style="position:absolute;left:1266px;top:660px;" width="14" height="14" viewBox="0 0 14 14"><path d="M3.5 5 L7 8.8 L10.5 5 Z" fill="#505050"/></svg>
<div style="position:absolute;left:1210px;top:619px;width:43px;height:42px;background:#5b6bd0;border-radius:21px 21px 3px 21px;box-shadow:0 0 3px rgba(80,90,160,0.25)"></div>
<div class="t" style="left:1218.8px;top:634.32px;font-size:11.9px;line-height:11.9px;font-weight:700;color:#fff;">Help</div>
<div style="position:absolute;left:23px;top:620.6px;width:40px;height:40px;background:#171717;border-radius:50%"></div>
<svg style="position:absolute;left:33px;top:632px;" width="22" height="16" viewBox="0 0 22 16"><rect x="2.85" y="3.75" width="10.15" height="9.3" rx="1.8" fill="none" stroke="#fff" stroke-width="1.5"/><path d="M13.3 8.4 L18 4.9 V11.9 Z" fill="none" stroke="#fff" stroke-width="1.4" stroke-linejoin="round"/></svg>
<div style="position:absolute;left:77px;top:621px;width:221px;height:40px;background:#171717;border-radius:20px"></div>
<div style="position:absolute;left:96.25px;top:634px;width:13.75px;height:13.5px;background:#f4522d;border-radius:2px"></div>
<div class="t" style="left:120px;top:635.60px;font-size:10.6px;line-height:10.6px;font-weight:700;color:#fff;letter-spacing:0.3px">0<span style="margin:0 1.5px">:</span>03</div>
<div style="position:absolute;left:161px;top:629px;width:1px;height:24px;background:#3a3a3a"></div>
<svg style="position:absolute;left:172px;top:631px;" width="18" height="18" viewBox="0 0 18 18"><circle cx="2.90" cy="7.60" r="0.85" fill="#fff"/><circle cx="2.90" cy="11.50" r="0.85" fill="#fff"/><circle cx="7.10" cy="3.40" r="0.85" fill="#fff"/><circle cx="7.10" cy="7.60" r="1.35" fill="#fff"/><circle cx="7.10" cy="11.50" r="1.35" fill="#fff"/><circle cx="7.10" cy="15.60" r="0.85" fill="#fff"/><circle cx="10.90" cy="3.40" r="0.85" fill="#fff"/><circle cx="10.90" cy="7.60" r="1.35" fill="#fff"/><circle cx="10.90" cy="11.50" r="1.35" fill="#fff"/><circle cx="10.90" cy="15.60" r="0.85" fill="#fff"/><circle cx="15.00" cy="7.60" r="0.85" fill="#fff"/><circle cx="15.00" cy="11.50" r="0.85" fill="#fff"/></svg>
<svg style="position:absolute;left:201px;top:632px;" width="20" height="14" viewBox="0 0 20 14"><path d="M5 9.6 Q11 2.6 17.2 10.4" fill="none" stroke="#fff" stroke-width="1.7" stroke-linecap="round"/><path d="M4 4.8 V10.6 H9.7" fill="none" stroke="#fff" stroke-width="1.7" stroke-linecap="round" stroke-linejoin="round"/></svg>
<div style="position:absolute;left:235.7px;top:634.4px;width:4px;height:12.2px;background:#fff;border-radius:2px"></div>
<div style="position:absolute;left:242.3px;top:634.4px;width:4px;height:12.2px;background:#fff;border-radius:2px"></div>
<svg style="position:absolute;left:262px;top:632px;" width="18" height="18" viewBox="0 0 18 18"><path d="M2.6 5 Q2.6 4.4 3.3 4.4 H14.7 Q15.4 4.4 15.4 5" fill="none" stroke="#fff" stroke-width="1.5" stroke-linecap="round"/><path d="M6.6 4.4 V3 Q6.6 1.6 8 1.6 H10 Q11.4 1.6 11.4 3 V4.4" fill="none" stroke="#fff" stroke-width="1.4"/><path d="M4.7 5.5 V14 Q4.7 15.1 5.8 15.1 H12.2 Q13.3 15.1 13.3 14 V5.5" fill="none" stroke="#fff" stroke-width="1.4"/><path d="M7.8 7.6 V12.8 M10.2 7.6 V12.8" stroke="#fff" stroke-width="1.1"/></svg>
<svg style="position:absolute;left:434px;top:116px;" width="26" height="36" viewBox="0 0 26 36"><path d="M2.3 2.2 L2.3 29 L8.9 23 L13.4 32.7 L16.9 30.7 L13.8 22.3 L23.2 21.5 Z" fill="#fff" stroke="#111" stroke-width="1" stroke-linejoin="round"/></svg>
</body></html>
